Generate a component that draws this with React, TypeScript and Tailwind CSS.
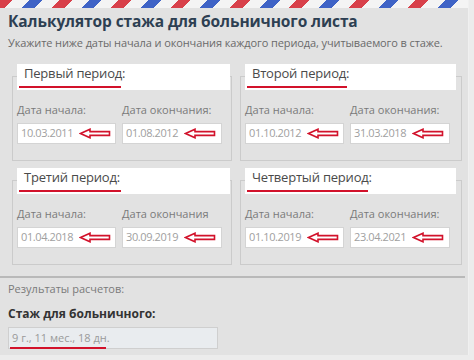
import React from "react";

type Period = {
  title: string;
  start: string;
  end: string;
  endLabel: string;
  line: string;
};

const periods: Period[] = [
  { title: "Первый период:", start: "10.03.2011", end: "01.08.2012", endLabel: "Дата окончания:", line: "w-[102px]" },
  { title: "Второй период:", start: "01.10.2012", end: "31.03.2018", endLabel: "Дата окончания:", line: "w-[100px]" },
  { title: "Третий период:", start: "01.04.2018", end: "30.09.2019", endLabel: "Дата окончания", line: "w-[102px]" },
  { title: "Четвертый период:", start: "01.10.2019", end: "23.04.2021", endLabel: "Дата окончания:", line: "w-[121px]" },
];

const Arrow = () => (
  <svg width="32" height="11" viewBox="0 0 32 11" className="shrink-0">
    <path
      d="M1.5 5.5 L11 1.2 L11 3.6 L30.5 3.6 L30.5 7.4 L11 7.4 L11 9.8 Z"
      fill="#fff"
      stroke="#d2122b"
      strokeWidth="1.6"
      strokeLinejoin="miter"
    />
  </svg>
);

const DateInput = ({ value, width }: { value: string; width: string }) => (
  <div className={`${width} h-[21px] bg-white border border-[#d4d4d4] flex items-center pl-[3px] gap-[6px]`}>
    <span className="text-[11px] text-[#a0a0a0] tracking-[-0.4px]">{value}</span>
    <Arrow />
  </div>
);

const PeriodBox = ({ p, right }: { p: Period; right?: boolean }) => (
  <div className="border border-[#cbcbcb] pb-[16px]">
    <div className={`-mt-[13px] ml-[4px] ${right ? "mr-[5px]" : "mr-[1px]"} h-[26px] bg-white relative`}>
      <div className="pl-[7px] pt-[1px] text-[13px] leading-[17px] text-[#4a4a4a] tracking-[-0.2px]">{p.title}</div>
      <div className={`absolute left-[2px] bottom-[2px] h-[2px] bg-[#d2122b] ${p.line}`} />
    </div>
    <div className="flex gap-[6px] ml-[4px] mt-[13px]">
      <div className="flex flex-col gap-[6px]">
        <span className="text-[11px] text-[#7a7a7a] leading-[14px]">Дата начала:</span>
        <DateInput value={p.start} width="w-[99px]" />
      </div>
      <div className="flex flex-col gap-[6px]">
        <span className="text-[11px] text-[#7a7a7a] leading-[14px]">{p.endLabel}</span>
        <DateInput value={p.end} width="w-[100px]" />
      </div>
    </div>
  </div>
);

export default function App() {
  return (
    <div className="w-[474px] h-[360px] bg-[#ececec] overflow-hidden" style={{ fontFamily: '"Open Sans", "Noto Sans", sans-serif' }}>
      <div className="w-[469px] h-[355px] bg-[#e2e2e2] border-r border-[#f0f0f0] flex flex-col">
        <div className="h-[8px] bg-[repeating-linear-gradient(135deg,#d8404a_0px,#d8404a_9px,#f4f4f4_9px,#f4f4f4_21px,#3f63c6_21px,#3f63c6_30px,#f4f4f4_30px,#f4f4f4_42px)]" />
        <h1 className="px-[8px] mt-[2px] text-[15.5px] font-bold text-[#2d3f52] leading-[22px] whitespace-nowrap tracking-[-0.1px]">
          Калькулятор стажа для больничного листа
        </h1>
        <p className="px-[8px] mt-[3px] text-[11px] text-[#6a6a6a] leading-[16px] whitespace-nowrap tracking-[-0.1px]">
          Укажите ниже даты начала и окончания каждого периода, учитываемого в стаже.
        </p>
        <div className="grid grid-cols-[220px_222px] gap-x-[8px] gap-y-[19px] pl-[12px] mt-[25px]">
          {periods.map((p, i) => (
            <PeriodBox key={i} p={p} right={i % 2 === 1} />
          ))}
        </div>
        <div className="mt-[11px] w-[465px] h-[2px] bg-[#b9b9b9]" />
        <div className="px-[8px] mt-[3px] text-[11px] text-[#7a7a7a] leading-[16px]">Результаты расчетов:</div>
        <div className="px-[8px] mt-[9px] text-[12px] font-bold text-[#333] leading-[16px]">Стаж для больничного:</div>
        <div className="ml-[8px] mt-[5px] w-[210px] h-[22px] bg-[#e9ecef] border border-[#cfcfcf] relative flex items-center pl-[3px]">
          <span className="text-[11px] text-[#9a9a9a]">9 г., 11 мес., 18 дн.</span>
          <div className="absolute left-[1px] -bottom-[1px] w-[96px] h-[2px] bg-[#d2122b]" />
        </div>
      </div>
    </div>
  );
}
